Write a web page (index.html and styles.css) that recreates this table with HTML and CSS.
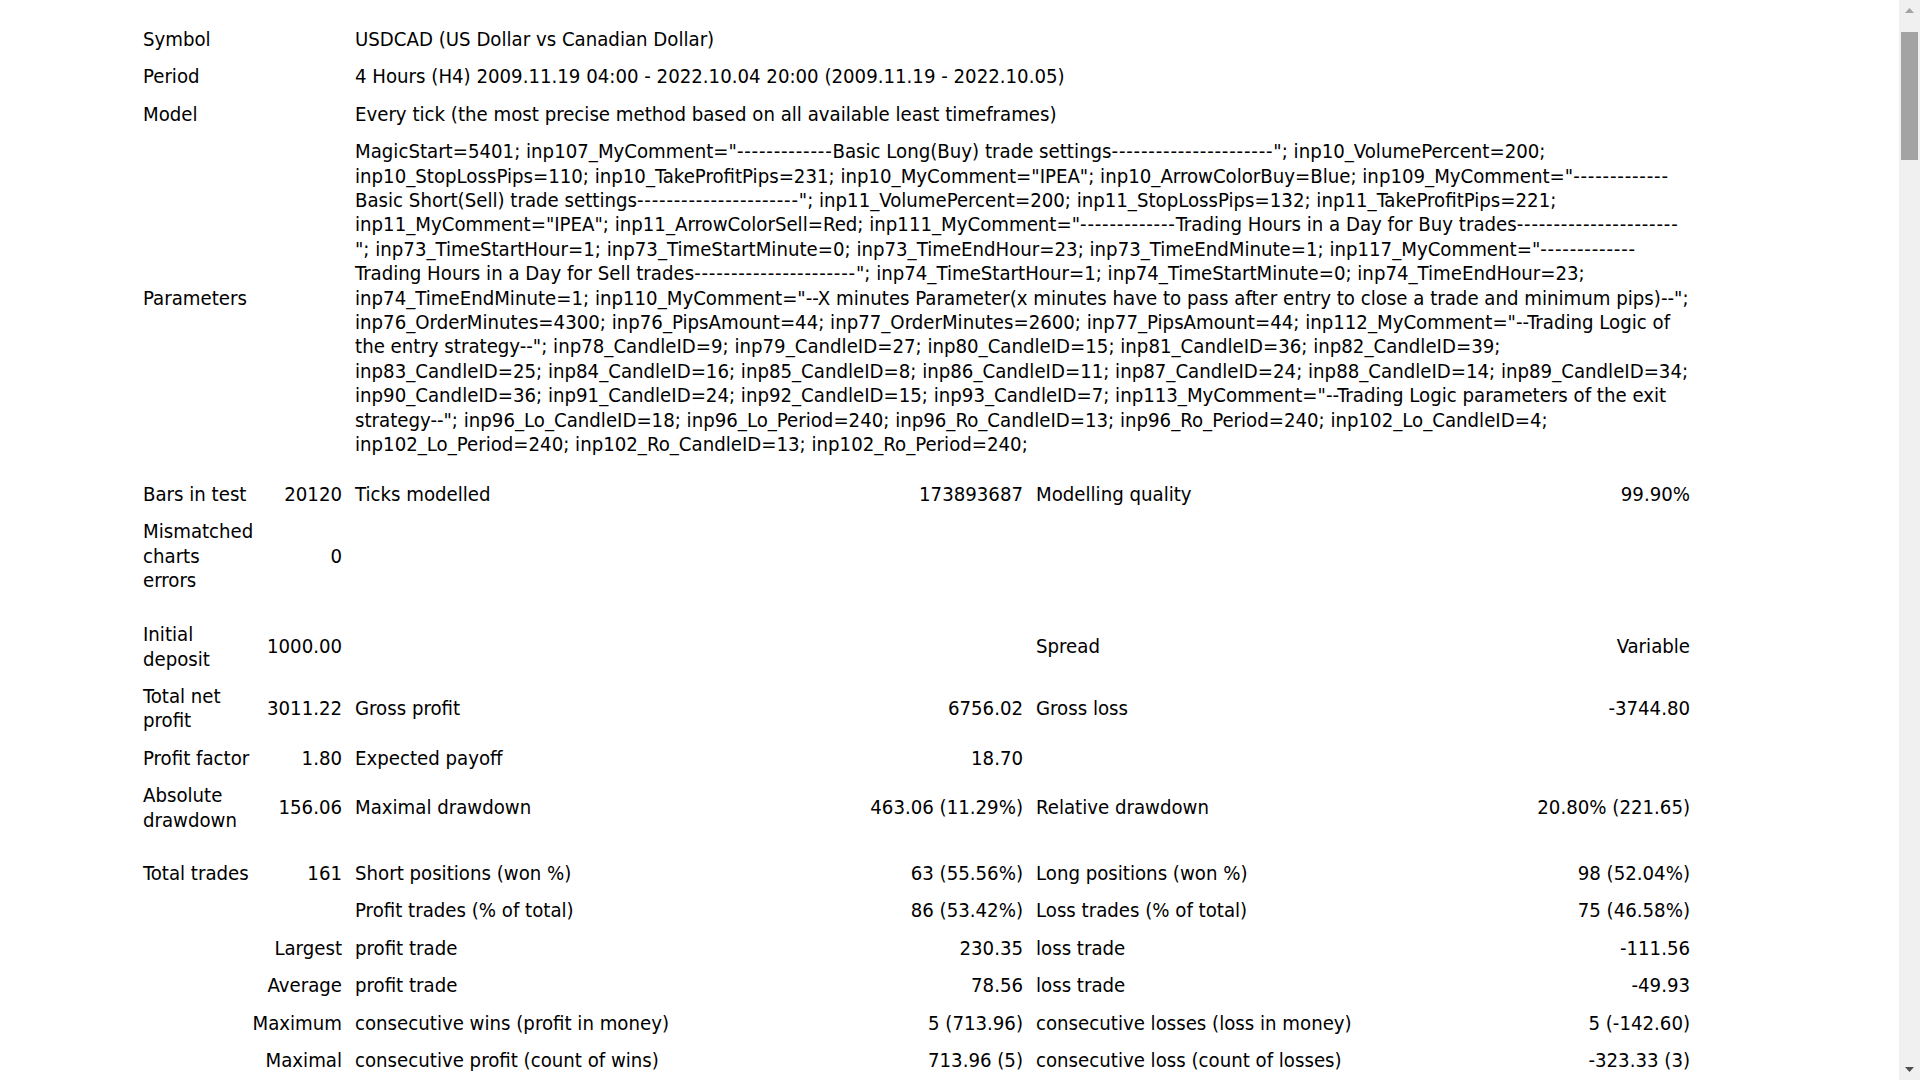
FILE: index.html
```html
<!DOCTYPE html>
<html>
<head>
<meta charset="utf-8">
<title>Strategy Tester Report</title>
<link rel="stylesheet" href="styles.css">
</head>
<body>
<table class="report">
<colgroup><col class="c1"><col class="c2"><col class="c3"><col class="c4"><col class="c5"><col class="c6"></colgroup>
<tr><td colspan="2">Symbol</td><td colspan="4">USDCAD (US Dollar vs Canadian Dollar)</td></tr>
<tr><td colspan="2">Period</td><td colspan="4">4 Hours (H4) 2009.11.19 04:00 - 2022.10.04 20:00 (2009.11.19 - 2022.10.05)</td></tr>
<tr><td colspan="2">Model</td><td colspan="4">Every tick (the most precise method based on all available least timeframes)</td></tr>
<tr><td colspan="2">Parameters</td><td colspan="4" class="params">MagicStart=5401; inp107_MyComment="<span class="dash">-------------</span>Basic Long(Buy) trade settings<span class="dash">----------------------</span>"; inp10_VolumePercent=200;<br>inp10_StopLossPips=110; inp10_TakeProfitPips=231; inp10_MyComment="IPEA"; inp10_ArrowColorBuy=Blue; inp109_MyComment="<span class="dash">-------------</span><br>Basic Short(Sell) trade settings<span class="dash">----------------------</span>"; inp11_VolumePercent=200; inp11_StopLossPips=132; inp11_TakeProfitPips=221;<br>inp11_MyComment="IPEA"; inp11_ArrowColorSell=Red; inp111_MyComment="<span class="dash">-------------</span>Trading Hours in a Day for Buy trades<span class="dash">----------------------</span><br>"; inp73_TimeStartHour=1; inp73_TimeStartMinute=0; inp73_TimeEndHour=23; inp73_TimeEndMinute=1; inp117_MyComment="<span class="dash">-------------</span><br>Trading Hours in a Day for Sell trades<span class="dash">----------------------</span>"; inp74_TimeStartHour=1; inp74_TimeStartMinute=0; inp74_TimeEndHour=23;<br>inp74_TimeEndMinute=1; inp110_MyComment="--X minutes Parameter(x minutes have to pass after entry to close a trade and minimum pips)--";<br>inp76_OrderMinutes=4300; inp76_PipsAmount=44; inp77_OrderMinutes=2600; inp77_PipsAmount=44; inp112_MyComment="--Trading Logic of<br>the entry strategy--"; inp78_CandleID=9; inp79_CandleID=27; inp80_CandleID=15; inp81_CandleID=36; inp82_CandleID=39;<br>inp83_CandleID=25; inp84_CandleID=16; inp85_CandleID=8; inp86_CandleID=11; inp87_CandleID=24; inp88_CandleID=14; inp89_CandleID=34;<br>inp90_CandleID=36; inp91_CandleID=24; inp92_CandleID=15; inp93_CandleID=7; inp113_MyComment="--Trading Logic parameters of the exit<br>strategy--"; inp96_Lo_CandleID=18; inp96_Lo_Period=240; inp96_Ro_CandleID=13; inp96_Ro_Period=240; inp102_Lo_CandleID=4;<br>inp102_Lo_Period=240; inp102_Ro_CandleID=13; inp102_Ro_Period=240;</td></tr>
<tr class="spacer s1"><td colspan="6"></td></tr>
<tr><td>Bars in test</td><td class="r">20120</td><td>Ticks modelled</td><td class="r">173893687</td><td>Modelling quality</td><td class="r">99.90%</td></tr>
<tr><td>Mismatched charts errors</td><td class="r">0</td><td colspan="4"></td></tr>
<tr class="spacer s2"><td colspan="6"></td></tr>
<tr><td>Initial deposit</td><td class="r">1000.00</td><td colspan="2"></td><td>Spread</td><td class="r">Variable</td></tr>
<tr><td>Total net profit</td><td class="r">3011.22</td><td>Gross profit</td><td class="r">6756.02</td><td>Gross loss</td><td class="r">-3744.80</td></tr>
<tr><td>Profit factor</td><td class="r">1.80</td><td>Expected payoff</td><td class="r">18.70</td><td colspan="2"></td></tr>
<tr><td>Absolute drawdown</td><td class="r">156.06</td><td>Maximal drawdown</td><td class="r">463.06 (11.29%)</td><td>Relative drawdown</td><td class="r">20.80% (221.65)</td></tr>
<tr class="spacer s3"><td colspan="6"></td></tr>
<tr><td>Total trades</td><td class="r">161</td><td>Short positions (won %)</td><td class="r">63 (55.56%)</td><td>Long positions (won %)</td><td class="r">98 (52.04%)</td></tr>
<tr><td colspan="2"></td><td>Profit trades (% of total)</td><td class="r">86 (53.42%)</td><td>Loss trades (% of total)</td><td class="r">75 (46.58%)</td></tr>
<tr><td colspan="2" class="r">Largest</td><td>profit trade</td><td class="r">230.35</td><td>loss trade</td><td class="r">-111.56</td></tr>
<tr><td colspan="2" class="r">Average</td><td>profit trade</td><td class="r">78.56</td><td>loss trade</td><td class="r">-49.93</td></tr>
<tr><td colspan="2" class="r">Maximum</td><td>consecutive wins (profit in money)</td><td class="r">5 (713.96)</td><td>consecutive losses (loss in money)</td><td class="r">5 (-142.60)</td></tr>
<tr><td colspan="2" class="r">Maximal</td><td>consecutive profit (count of wins)</td><td class="r">713.96 (5)</td><td>consecutive loss (count of losses)</td><td class="r">-323.33 (3)</td></tr>
</table>
<div class="scrollbar">
  <div class="sb-btn"><svg width="9" height="5" viewBox="0 0 9 5"><path d="M0 5 L4.5 0 L9 5 Z" fill="#a3a3a3"/></svg></div>
  <div class="sb-track"><div class="sb-thumb"></div></div>
  <div class="sb-btn"><svg width="9" height="5" viewBox="0 0 9 5"><path d="M0 0 L4.5 5 L9 0 Z" fill="#505050"/></svg></div>
</div>
</body>
</html>
```

FILE: styles.css
```css
html {
  overflow: hidden;
  background: #ffffff;
}
body {
  margin: 0;
  padding: 20px 0 0 136px;
  background: #ffffff;
  color: #000000;
  font-family: "DejaVu Sans Condensed", "DejaVu Sans", Tahoma, sans-serif;
  font-size: 20.2px;
}
.report {
  table-layout: fixed;
  width: 1561px;
  border-collapse: separate;
  border-spacing: 1px;
}
.report td {
  padding: 6px;
  line-height: 24.4px;
  text-align: left;
  vertical-align: middle;
  font-size: 20.2px;
}
.report td.r {
  text-align: right;
}
.c1 { width: 123px; }
.c2 { width: 87px; }
.c3 { width: 412px; }
.c4 { width: 267px; }
.c5 { width: 372px; }
.c6 { width: 293px; }
.params {
  white-space: nowrap;
}
.dash {
  letter-spacing: 0.8px;
}
.spacer td {
  padding: 0;
  line-height: 0;
}
.s1 td { height: 11.5px; }
.s2 td { height: 15.5px; }
.s3 td { height: 15px; }
.scrollbar {
  position: fixed;
  top: 0;
  right: 0;
  width: 21px;
  height: 1080px;
  background: #f0f0f0;
  display: flex;
  flex-direction: column;
}
.sb-btn {
  height: 21px;
  display: flex;
  align-items: center;
  justify-content: center;
}
.sb-track {
  flex: 1;
  padding-top: 11px;
}
.sb-thumb {
  margin-left: 2px;
  width: 17px;
  height: 128px;
  background: #a3a3a3;
}
```
